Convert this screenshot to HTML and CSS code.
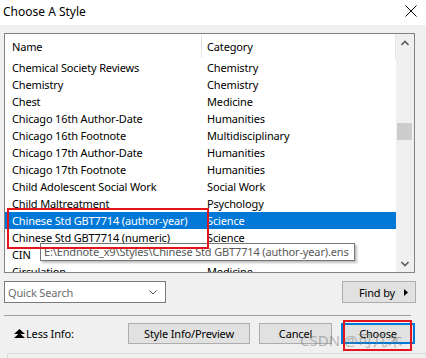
FILE: index.html
```html
<!DOCTYPE html>
<html lang="en">
<head>
  <meta charset="UTF-8">
  <meta name="viewport" content="width=device-width, initial-scale=1.0">
  <link rel="stylesheet" href="styles.css">
  <title>Choose A Style</title>
</head>
<body>
  <div class="titlebar">
    <span class="title">Choose A Style</span>
    <svg class="close" width="12" height="12" viewBox="0 0 12 12">
      <path d="M0.5 0.5 L11.5 11.5 M11.5 0.5 L0.5 11.5" stroke="#000" stroke-width="1" fill="none"/>
    </svg>
  </div>

  <div class="dialog">
    <div class="listbox">
      <div class="list">
        <div class="list-head">
          <div class="head-name">Name</div>
          <div class="head-cat">Category</div>
        </div>
        <div class="row"><span>Chemical Society Reviews</span><span>Chemistry</span></div>
        <div class="row"><span>Chemistry</span><span>Chemistry</span></div>
        <div class="row"><span>Chest</span><span>Medicine</span></div>
        <div class="row"><span>Chicago 16th Author-Date</span><span>Humanities</span></div>
        <div class="row"><span>Chicago 16th Footnote</span><span>Multidisciplinary</span></div>
        <div class="row"><span>Chicago 17th Author-Date</span><span>Humanities</span></div>
        <div class="row"><span>Chicago 17th Footnote</span><span>Humanities</span></div>
        <div class="row"><span>Child Adolescent Social Work</span><span>Social Work</span></div>
        <div class="row"><span>Child Maltreatment</span><span>Psychology</span></div>
        <div class="row selected"><span>Chinese Std GBT7714 (author-year)</span><span>Science</span></div>
        <div class="row"><span>Chinese Std GBT7714 (numeric)</span><span>Science</span></div>
        <div class="row"><span>CIN</span><span></span></div>
        <div class="row"><span>Circulation</span><span>Medicine</span></div>
      </div>
      <div class="scrollbar">
        <div class="arrow">
          <svg width="8" height="6" viewBox="0 0 8 6"><path d="M0.5 5 L4 1.5 L7.5 5" stroke="#606060" stroke-width="1.6" fill="none"/></svg>
        </div>
        <div class="track"><div class="thumb"></div></div>
        <div class="arrow">
          <svg width="8" height="6" viewBox="0 0 8 6"><path d="M0.5 1 L4 4.5 L7.5 1" stroke="#606060" stroke-width="1.6" fill="none"/></svg>
        </div>
      </div>
    </div>

    <div class="search-row">
      <div class="combo">
        <span>Quick Search</span>
        <svg width="8" height="5" viewBox="0 0 8 5"><path d="M0.5 0.5 L4 4 L7.5 0.5" stroke="#505050" stroke-width="1" fill="none"/></svg>
      </div>
      <div class="btn find">
        <span>Find by</span>
        <svg width="4" height="7" viewBox="0 0 4 7"><path d="M0 0 L4 3.5 L0 7 Z" fill="#000"/></svg>
      </div>
    </div>

    <div class="separator"></div>

    <div class="button-row">
      <div class="less-info">
        <svg width="11" height="10" viewBox="0 0 11 10"><path d="M5.5 0 L11 5 L0 5 Z M5.5 4 L11 9 L0 9 Z" fill="#000"/></svg>
        <span>Less Info:</span>
      </div>
      <div class="btn preview">Style Info/Preview</div>
      <div class="btn cancel">Cancel</div>
      <div class="btn choose">Choose</div>
    </div>

    <div class="bottom-box"></div>
  </div>

  <div class="tooltip">E:\Endnote_x9\Styles\Chinese Std GBT7714 (author-year).ens</div>
  <div class="mark mark-rows"></div>
  <div class="mark mark-choose"></div>
  <div class="watermark">CSDN @可几木</div>
</body>
</html>
```

FILE: styles.css
```css
body {
  margin: 0;
  width: 426px;
  height: 358px;
  overflow: hidden;
  position: relative;
  background-color: #f0f0f0;
  font-family: "Noto Sans", "Noto Sans CJK SC", sans-serif;
  font-size: 11px;
  letter-spacing: -0.15px;
  color: #000;
}

.titlebar {
  height: 25px;
  background-color: #fff;
  display: flex;
  align-items: center;
  justify-content: space-between;
  padding: 0 9px 0 3px;
}

.title {
  font-size: 12px;
  letter-spacing: 0;
  margin-top: -3px;
}

.close {
  margin-top: -4px;
}

.dialog {
  padding: 8px 0 0 4px;
}

.listbox {
  width: 411px;
  height: 240px;
  box-sizing: border-box;
  border: 1px solid #828282;
  background-color: #fff;
  display: flex;
  overflow: hidden;
}

.list {
  width: 391px;
  overflow: hidden;
}

.list-head {
  height: 25px;
  display: grid;
  grid-template-columns: 196px 1fr;
  align-items: center;
  border-right: 1px solid #e5e5e5;
  box-sizing: border-box;
}

.head-name {
  padding-left: 7px;
}

.head-cat {
  border-left: 1px solid #e5e5e5;
  height: 23px;
  line-height: 23px;
  padding-left: 5px;
}

.row {
  display: grid;
  grid-template-columns: 196px 1fr;
  height: 17px;
  line-height: 17px;
  white-space: nowrap;
}

.row span:first-child {
  padding-left: 7px;
}

.row span:last-child {
  padding-left: 6px;
}

.row.selected {
  background-color: #0078d7;
  color: #fff;
}

.scrollbar {
  width: 18px;
  background-color: #f0f0f0;
  display: flex;
  flex-direction: column;
}

.arrow {
  height: 17px;
  display: flex;
  align-items: center;
  justify-content: center;
}

.track {
  flex: 1;
}

.thumb {
  margin: 72px 2px 0 1px;
  height: 17px;
  background-color: #cdcdcd;
}

.search-row {
  margin-top: 8px;
  display: flex;
  justify-content: space-between;
  padding-right: 10px;
}

.combo {
  width: 162px;
  height: 22px;
  box-sizing: border-box;
  border: 1px solid #7a7a7a;
  background-color: #fff;
  display: flex;
  align-items: center;
  justify-content: space-between;
  padding: 0 8px 0 3px;
  color: #6d6d6d;
}

.btn {
  height: 21px;
  box-sizing: border-box;
  border: 1px solid #adadad;
  background-color: #e1e1e1;
  display: flex;
  align-items: center;
  justify-content: center;
}

.find {
  width: 74px;
  justify-content: flex-end;
  gap: 9px;
  padding-right: 7px;
  height: 22px;
}

.separator {
  margin-top: 12px;
  width: 407px;
  height: 1px;
  background-color: #a0a0a0;
}

.button-row {
  margin-top: 7px;
  display: flex;
  align-items: center;
}

.less-info {
  width: 124px;
  display: flex;
  align-items: center;
  gap: 1px;
  padding-left: 10px;
  box-sizing: border-box;
}

.preview {
  width: 122px;
}

.cancel {
  width: 73px;
  margin-left: 9px;
}

.choose {
  width: 74px;
  margin-left: 9px;
  border: 2px solid #0078d7;
}

.bottom-box {
  margin: 9px 0 0 3px;
  width: 420px;
  height: 10px;
  border-top: 1px solid #dadada;
  border-left: 1px solid #dadada;
}

.tooltip {
  position: absolute;
  left: 40px;
  top: 243px;
  width: 315px;
  height: 18px;
  box-sizing: border-box;
  border: 1px solid #767676;
  background-color: #fff;
  box-shadow: 2px 2px 2px rgba(0, 0, 0, 0.25);
  color: #575757;
  line-height: 16px;
  padding-left: 3px;
  white-space: nowrap;
}

.mark {
  position: absolute;
  border: 2px solid #e3141c;
  box-sizing: border-box;
}

.mark-rows {
  left: 7px;
  top: 208px;
  width: 202px;
  height: 41px;
}

.mark-choose {
  left: 343px;
  top: 320px;
  width: 69px;
  height: 31px;
}

.watermark {
  position: absolute;
  left: 300px;
  top: 329px;
  font-size: 15px;
  letter-spacing: 0;
  color: rgba(120, 120, 120, 0.5);
  white-space: nowrap;
}
```
